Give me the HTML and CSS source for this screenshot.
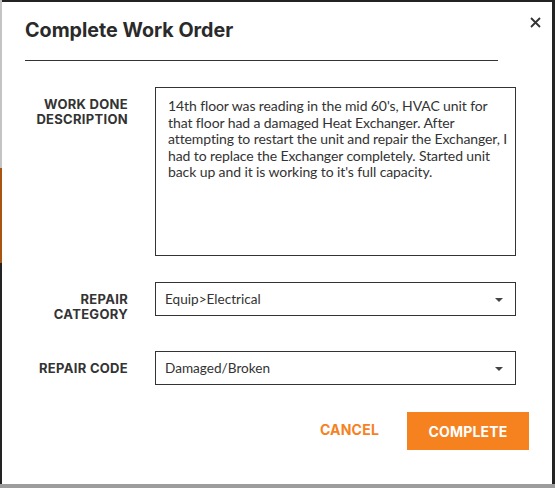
FILE: index.html
```html
<!DOCTYPE html>
<html lang="en">
<head>
    <meta charset="UTF-8">
    <meta name="viewport" content="width=device-width, initial-scale=1.0">
    <title>Complete Work Order</title>
    <link rel="stylesheet" href="styles.css">
</head>
<body>

<div class="modal">
    <button class="close-btn" aria-label="Close">
        <svg width="11" height="11" viewBox="0 0 11 11"><path d="M1 1L10 10M10 1L1 10" stroke="#333" stroke-width="1.8"/></svg>
    </button>

    <div class="modal-header">
        <h2>Complete Work Order</h2>
    </div>

    <div class="modal-body">
        <div class="form-row">
            <label for="workDone">WORK DONE DESCRIPTION</label>
            <textarea id="workDone">14th floor was reading in the mid 60's, HVAC unit for that floor had a damaged Heat Exchanger. After attempting to restart the unit and repair the Exchanger, I had to replace the Exchanger completely. Started unit back up and it is working to it's full capacity.</textarea>
        </div>

        <div class="form-row">
            <label for="repairCategory">REPAIR CATEGORY</label>
            <div class="select-wrap">
                <select id="repairCategory">
                    <option>Equip&gt;Electrical</option>
                </select>
            </div>
        </div>

        <div class="form-row">
            <label for="repairCode">REPAIR CODE</label>
            <div class="select-wrap">
                <select id="repairCode">
                    <option>Damaged/Broken</option>
                </select>
            </div>
        </div>
    </div>

    <div class="modal-footer">
        <button class="btn-cancel">CANCEL</button>
        <button class="btn-complete">COMPLETE</button>
    </div>
</div>

</body>
</html>
```

FILE: styles.css
```css
html, body {
    height: 100%;
}
body {
    margin: 0;
    padding: 2px 0 0 2px;
    box-sizing: border-box;
    overflow: hidden;
    font-family: Lato, "Liberation Sans", sans-serif;
    background:
        linear-gradient(#c4c4c4, #c4c4c4) 0 0 / 2px 168px no-repeat,
        linear-gradient(#a85513, #a85513) 0 168px / 2px 95px no-repeat,
        linear-gradient(#9d9d9d, #9d9d9d) 0 484px / 100% 4px no-repeat,
        #232323;
}
.modal {
    position: relative;
    width: 550px;
    height: 482px;
    background-color: #fff;
}
.close-btn {
    position: absolute;
    top: 15px;
    right: 11px;
    padding: 0;
    border: 0;
    background: none;
    cursor: pointer;
    line-height: 0;
}
.modal-header {
    padding: 16px 54px 0 23px;
}
.modal-header h2 {
    margin: 0;
    padding-bottom: 18px;
    border-bottom: 1px solid #333;
    font-family: Inter, "DejaVu Sans", sans-serif;
    font-size: 19.7px;
    font-weight: 700;
    line-height: 24px;
    color: #2a2a2a;
}
.modal-body {
    padding: 26px 36px 0 23px;
}
.form-row {
    display: flex;
    gap: 27px;
    margin-bottom: 26px;
}
.form-row:last-child {
    margin-bottom: 0;
}
.form-row label {
    width: 103px;
    flex-shrink: 0;
    padding: 10px 0 3px;
    text-align: right;
    font-family: Inter, "DejaVu Sans", sans-serif;
    font-size: 13px;
    font-weight: 700;
    letter-spacing: 0.3px;
    line-height: 15px;
    color: #333;
}
textarea {
    flex: 1;
    height: 169px;
    box-sizing: border-box;
    padding: 10px 2px 10px 12px;
    border: 1px solid #333;
    resize: none;
    overflow: hidden;
    font-family: Lato, sans-serif;
    font-size: 14px;
    letter-spacing: -0.1px;
    line-height: 16.6px;
    color: #333;
}
.select-wrap {
    flex: 1;
    position: relative;
}
.select-wrap::after {
    content: "";
    position: absolute;
    right: 13px;
    top: 16px;
    border-left: 4px solid transparent;
    border-right: 4px solid transparent;
    border-top: 4px solid #444;
}
select {
    width: 100%;
    height: 34px;
    padding: 0 9px;
    border: 1px solid #333;
    border-radius: 0;
    background: #fff;
    appearance: none;
    font-family: Lato, sans-serif;
    font-size: 13.6px;
    color: #333;
}
.modal-footer {
    display: flex;
    justify-content: flex-end;
    align-items: center;
    gap: 24px;
    padding: 27px 23px 0 0;
}
.modal-footer button {
    border: 0;
    font-family: Inter, "DejaVu Sans", sans-serif;
    font-size: 14px;
    font-weight: 700;
    letter-spacing: 0.2px;
    cursor: pointer;
}
.btn-cancel {
    padding: 0 4px 4px;
    background: none;
    color: #f5821f;
}
.btn-complete {
    width: 122px;
    height: 38px;
    background-color: #f5821f;
    color: #fff;
}
```
